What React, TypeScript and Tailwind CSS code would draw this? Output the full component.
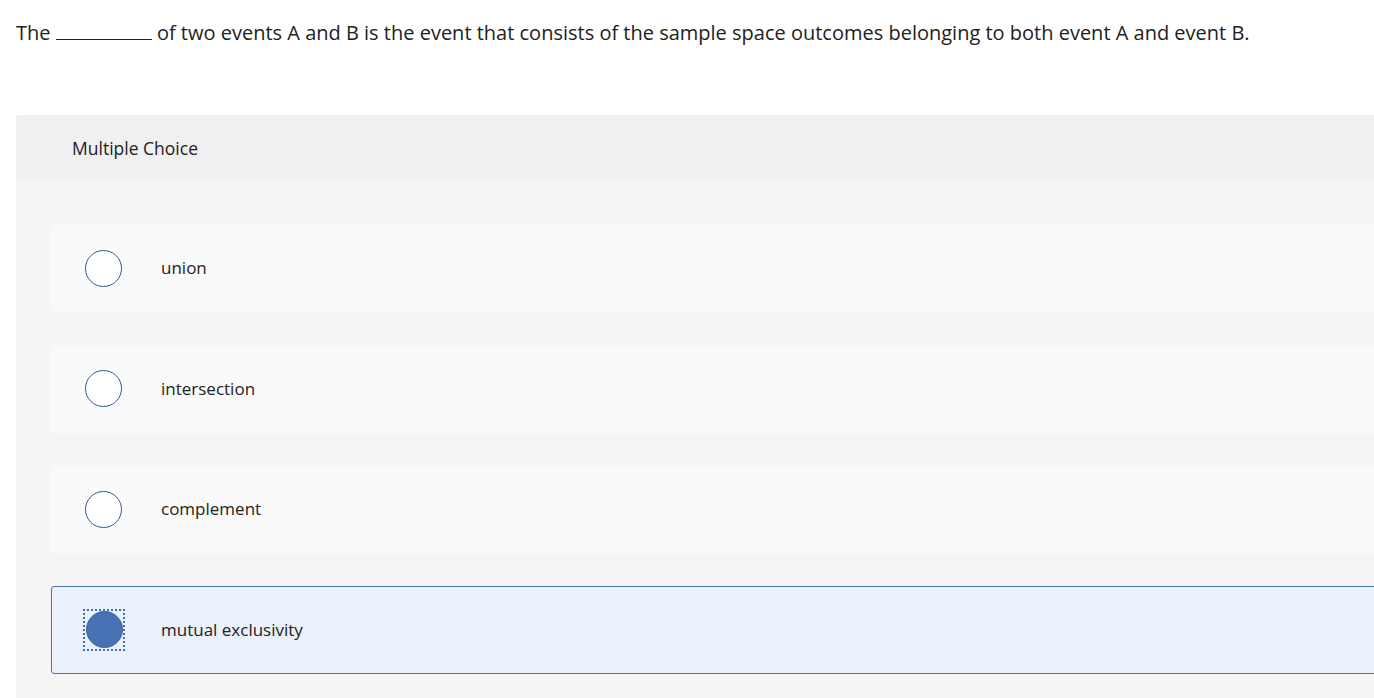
import React from 'react'

const options = ['union', 'intersection', 'complement', 'mutual exclusivity']

const App = () => {
  const selected = 3

  return (
    <div className="w-[1374px] h-[698px] overflow-hidden bg-white text-[#222]" style={{ fontFamily: '"Open Sans", Lato, sans-serif' }}>
      {/* Question */}
      <p className="pl-4 pt-[20px] text-[20px] leading-[26px]">
        The <span className="inline-block w-[96px] border-b border-[#222] align-baseline"></span> of two events A and B is the event that consists of the sample space outcomes belonging to both event A and event B.
      </p>

      {/* Answer panel */}
      <div className="ml-4 mt-[69px] w-[1420px] rounded-tl-[3px] bg-[#f5f5f5]">
        <div className="h-[66px] flex items-center pl-[56px] bg-[#f0f0f0] rounded-tl-[3px] text-[17.5px]">
          Multiple Choice
        </div>
        <div className="pl-[35px] pt-[43px] flex flex-col gap-[32.5px] pb-[40px]">
          {options.map((label, i) => {
            const isSel = i === selected
            return (
              <div
                key={label}
                className={
                  isSel
                    ? 'h-[88px] flex items-center rounded-[3px] border border-[#4a76b5] bg-[#eaf1fa]'
                    : 'h-[88px] flex items-center rounded-[3px] bg-[#fafafa]'
                }
              >
                <div className={isSel ? 'ml-[31px] w-[42px] h-[42px] flex items-center justify-center border-2 border-dotted border-[#3f6fb5]' : 'ml-[33px] w-[38px] h-[38px] flex items-center justify-center'}>
                  <div
                    className={
                      isSel
                        ? 'w-[37px] h-[37px] rounded-full bg-[#4672b4] border border-[#3d63a0]'
                        : 'w-[37px] h-[37px] rounded-full bg-white border border-[#2f5b94]'
                    }
                  />
                </div>
                <span className={isSel ? 'ml-[36px] text-[17px]' : 'ml-[39px] text-[17px]'}>{label}</span>
              </div>
            )
          })}
        </div>
      </div>
    </div>
  )
}

export default App
